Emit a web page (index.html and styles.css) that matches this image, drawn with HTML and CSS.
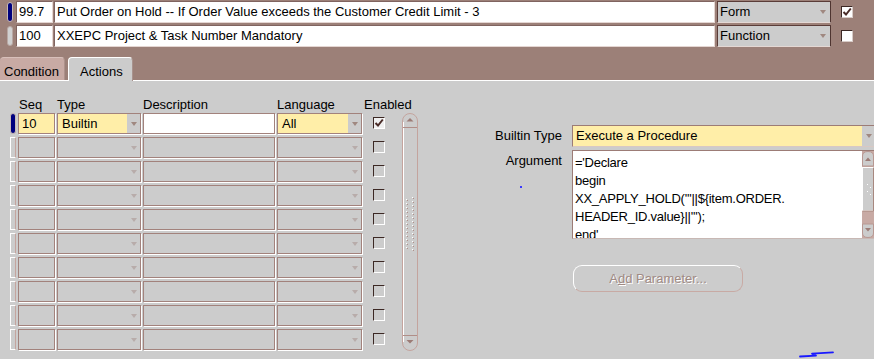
FILE: index.html
```html
<!DOCTYPE html>
<html>
<head>
<meta charset="utf-8">
<link rel="stylesheet" href="styles.css">
</head>
<body>
<div class="top">
  <div class="rec-row">
    <span class="ind ind-cur"></span>
    <div class="tfld tseq">99.7</div>
    <div class="tfld tdesc">Put Order on Hold -- If Order Value exceeds the Customer Credit Limit - 3</div>
    <div class="tsel"><span class="tsel-text">Form</span><span class="tri"></span></div>
    <span class="chk chk-top"><svg width="10" height="10" viewBox="0 0 10 10"><path d="M1.5 5 L4 7.5 L8.8 1.5" fill="none" stroke="#4a2c28" stroke-width="2"/></svg></span>
  </div>
  <div class="rec-row">
    <span class="ind ind-off"></span>
    <div class="tfld tseq">100</div>
    <div class="tfld tdesc">XXEPC Project &amp; Task Number Mandatory</div>
    <div class="tsel"><span class="tsel-text">Function</span><span class="tri"></span></div>
    <span class="chk chk-top"></span>
  </div>
  <div class="tabs">
    <div class="tab tab-cond">Condition</div>
    <div class="tab tab-act">Actions</div>
  </div>
</div>
<div class="panel">
  <div class="table">
    <div class="thead">
      <span></span>
      <span class="h h-seq">Seq</span>
      <span class="h">Type</span>
      <span class="h">Description</span>
      <span class="h">Language</span>
      <span class="h h-en">Enabled</span>
    </div>
    <div class="tbody">
      <div class="rows">
        <span class="rind rind-cur"></span>
        <div class="cell yel">10</div>
        <div class="cell sel"><span class="sel-text yel">Builtin</span><span class="sel-btn"><span class="tri"></span></span></div>
        <div class="cell wht"></div>
        <div class="cell sel"><span class="sel-text yel">All</span><span class="sel-btn"><span class="tri"></span></span></div>
        <span></span>
        <span class="chk chk-low chk-on"><svg width="10" height="10" viewBox="0 0 10 10"><path d="M1.5 5 L4 7.5 L8.8 1.5" fill="none" stroke="#4a2c28" stroke-width="2"/></svg></span>

        <span class="rind"></span><div class="cell"></div><div class="cell sel"><span class="sel-text"></span><span class="sel-btn"><span class="tri tri-dim"></span></span></div><div class="cell"></div><div class="cell sel"><span class="sel-text"></span><span class="sel-btn"><span class="tri tri-dim"></span></span></div><span></span><span class="chk chk-low"></span>
        <span class="rind"></span><div class="cell"></div><div class="cell sel"><span class="sel-text"></span><span class="sel-btn"><span class="tri tri-dim"></span></span></div><div class="cell"></div><div class="cell sel"><span class="sel-text"></span><span class="sel-btn"><span class="tri tri-dim"></span></span></div><span></span><span class="chk chk-low"></span>
        <span class="rind"></span><div class="cell"></div><div class="cell sel"><span class="sel-text"></span><span class="sel-btn"><span class="tri tri-dim"></span></span></div><div class="cell"></div><div class="cell sel"><span class="sel-text"></span><span class="sel-btn"><span class="tri tri-dim"></span></span></div><span></span><span class="chk chk-low"></span>
        <span class="rind"></span><div class="cell"></div><div class="cell sel"><span class="sel-text"></span><span class="sel-btn"><span class="tri tri-dim"></span></span></div><div class="cell"></div><div class="cell sel"><span class="sel-text"></span><span class="sel-btn"><span class="tri tri-dim"></span></span></div><span></span><span class="chk chk-low"></span>
        <span class="rind"></span><div class="cell"></div><div class="cell sel"><span class="sel-text"></span><span class="sel-btn"><span class="tri tri-dim"></span></span></div><div class="cell"></div><div class="cell sel"><span class="sel-text"></span><span class="sel-btn"><span class="tri tri-dim"></span></span></div><span></span><span class="chk chk-low"></span>
        <span class="rind"></span><div class="cell"></div><div class="cell sel"><span class="sel-text"></span><span class="sel-btn"><span class="tri tri-dim"></span></span></div><div class="cell"></div><div class="cell sel"><span class="sel-text"></span><span class="sel-btn"><span class="tri tri-dim"></span></span></div><span></span><span class="chk chk-low"></span>
        <span class="rind"></span><div class="cell"></div><div class="cell sel"><span class="sel-text"></span><span class="sel-btn"><span class="tri tri-dim"></span></span></div><div class="cell"></div><div class="cell sel"><span class="sel-text"></span><span class="sel-btn"><span class="tri tri-dim"></span></span></div><span></span><span class="chk chk-low"></span>
        <span class="rind"></span><div class="cell"></div><div class="cell sel"><span class="sel-text"></span><span class="sel-btn"><span class="tri tri-dim"></span></span></div><div class="cell"></div><div class="cell sel"><span class="sel-text"></span><span class="sel-btn"><span class="tri tri-dim"></span></span></div><span></span><span class="chk chk-low"></span>
        <span class="rind"></span><div class="cell"></div><div class="cell sel"><span class="sel-text"></span><span class="sel-btn"><span class="tri tri-dim"></span></span></div><div class="cell"></div><div class="cell sel"><span class="sel-text"></span><span class="sel-btn"><span class="tri tri-dim"></span></span></div><span></span><span class="chk chk-low"></span>
      </div>
      <svg class="vscroll" width="16" height="238" viewBox="0 0 16 238">
        <rect x="0.5" y="0.5" width="15" height="237" rx="7.5" fill="#cccccc" stroke="#c4a49e"/>
        <path d="M1.5 9 V229" stroke="#ffffff"/>
        <path d="M1 14.5 H15" stroke="#b08e88"/>
        <path d="M1 222.5 H15" stroke="#b08e88"/>
        <polygon points="4.5,8.5 11.5,8.5 8,5" fill="#9c7c76"/>
        <polygon points="4.5,227 11.5,227 8,230.5" fill="#9c7c76"/>
        <g fill="#ffffff">
          <rect x="4" y="86" width="1" height="1"/><rect x="10" y="84" width="1" height="1"/>
          <rect x="4" y="90" width="1" height="1"/><rect x="10" y="88" width="1" height="1"/>
          <rect x="4" y="94" width="1" height="1"/><rect x="10" y="92" width="1" height="1"/>
          <rect x="4" y="98" width="1" height="1"/><rect x="10" y="96" width="1" height="1"/>
          <rect x="4" y="102" width="1" height="1"/><rect x="10" y="100" width="1" height="1"/>
          <rect x="4" y="106" width="1" height="1"/><rect x="10" y="104" width="1" height="1"/>
          <rect x="4" y="110" width="1" height="1"/><rect x="10" y="108" width="1" height="1"/>
          <rect x="4" y="114" width="1" height="1"/><rect x="10" y="112" width="1" height="1"/>
          <rect x="4" y="118" width="1" height="1"/><rect x="10" y="116" width="1" height="1"/>
          <rect x="4" y="122" width="1" height="1"/><rect x="10" y="120" width="1" height="1"/>
          <rect x="4" y="126" width="1" height="1"/><rect x="10" y="124" width="1" height="1"/>
          <rect x="4" y="130" width="1" height="1"/><rect x="10" y="128" width="1" height="1"/>
          <rect x="4" y="134" width="1" height="1"/><rect x="10" y="132" width="1" height="1"/>
          <rect x="10" y="136" width="1" height="1"/>
        </g>
        <g fill="#b0908a">
          <rect x="5" y="87" width="1" height="1"/><rect x="11" y="85" width="1" height="1"/>
          <rect x="5" y="91" width="1" height="1"/><rect x="11" y="89" width="1" height="1"/>
          <rect x="5" y="95" width="1" height="1"/><rect x="11" y="93" width="1" height="1"/>
          <rect x="5" y="99" width="1" height="1"/><rect x="11" y="97" width="1" height="1"/>
          <rect x="5" y="103" width="1" height="1"/><rect x="11" y="101" width="1" height="1"/>
          <rect x="5" y="107" width="1" height="1"/><rect x="11" y="105" width="1" height="1"/>
          <rect x="5" y="111" width="1" height="1"/><rect x="11" y="109" width="1" height="1"/>
          <rect x="5" y="115" width="1" height="1"/><rect x="11" y="113" width="1" height="1"/>
          <rect x="5" y="119" width="1" height="1"/><rect x="11" y="117" width="1" height="1"/>
          <rect x="5" y="123" width="1" height="1"/><rect x="11" y="121" width="1" height="1"/>
          <rect x="5" y="127" width="1" height="1"/><rect x="11" y="125" width="1" height="1"/>
          <rect x="5" y="131" width="1" height="1"/><rect x="11" y="129" width="1" height="1"/>
          <rect x="5" y="135" width="1" height="1"/><rect x="11" y="133" width="1" height="1"/>
          <rect x="11" y="137" width="1" height="1"/>
        </g>
      </svg>
    </div>
  </div>
  <div class="detail">
    <div class="lbl lbl-mid">Builtin Type</div>
    <div class="dsel"><span class="dsel-text">Execute a Procedure</span><span class="sel-btn dsel-btn"><span class="tri"></span></span></div>
    <div class="lbl lbl-top">Argument</div>
    <div class="argbox">
      <div class="argtext">='Declare
begin
XX_APPLY_HOLD('''||${item.ORDER.
HEADER_ID.value}||''');
end'</div>
      <svg class="argscroll" width="12" height="87" viewBox="0 0 12 87">
        <rect x="0" y="0" width="12" height="87" fill="#c8aaa4"/>
        <path d="M0.5 15 V5 Q0.5 0.5 6 0.5 Q11.5 0.5 11.5 5 V15 Z" fill="#cccccc" stroke="#b89892"/>
        <polygon points="3,10 9,10 6,6.5" fill="#9c7c76"/>
        <rect x="0.5" y="16.5" width="11" height="43" fill="#cccccc" stroke="#ffffff"/>
        <path d="M0.5 60 H11.5 V16.5" fill="none" stroke="#a8887f"/>
        <rect x="5" y="33" width="1" height="1" fill="#fff"/><rect x="8" y="36" width="1" height="1" fill="#fff"/>
        <rect x="5" y="40" width="1" height="1" fill="#fff"/><rect x="8" y="43" width="1" height="1" fill="#fff"/>
        <path d="M0.5 73 V82 Q0.5 86.5 6 86.5 Q11.5 86.5 11.5 82 V73 Z" fill="#cccccc" stroke="#b89892"/>
        <polygon points="3,77 9,77 6,80.5" fill="#9c7c76"/>
      </svg>
    </div>
    <div class="btn-slot">
      <div class="btn">A<u>d</u>d Parameter...</div>
    </div>
  </div>
</div>
<span class="ink-dot"></span>
<svg class="ink-scribble" width="36" height="8" viewBox="0 0 36 8"><path d="M1 6.5 L17 5.6 L13 3.6 L34 2.4" fill="none" stroke="#1a1aff" stroke-width="1.8" stroke-linecap="round" stroke-linejoin="round"/></svg>
</body>
</html>
```

FILE: styles.css
```css
* { box-sizing: border-box; }
html, body { margin: 0; padding: 0; }
body {
  width: 874px;
  height: 359px;
  overflow: hidden;
  position: relative;
  background: #cccccc;
  font-family: "Liberation Sans", Arial, sans-serif;
  font-size: 13px;
  color: #000;
}

/* ---------- top region ---------- */
.top {
  background: #9c8078;
  height: 80px;
  padding-top: 1px;
  display: flex;
  flex-direction: column;
}
.rec-row {
  display: flex;
  align-items: center;
  height: 22px;
  margin-bottom: 2px;
  padding-left: 7px;
}
.ind {
  width: 6px;
  height: 20px;
  border-radius: 3px;
}
.ind-cur { background: #00007e; border: 1px solid #c8b8b4; }
.ind-off { background: #d0d0d0; border: 1px solid #b8a8a4; }
.tfld {
  height: 22px;
  background: #fff;
  border: 1px solid;
  border-color: #806460 #e4d6d2 #e4d6d2 #806460;
  line-height: 20px;
  padding-left: 2px;
  white-space: nowrap;
  overflow: hidden;
}
.tseq { width: 37px; margin-left: 3px; }
.tdesc { width: 661px; margin-left: 1px; }
.tsel {
  width: 114px;
  height: 22px;
  margin-left: 2px;
  background: #cccccc;
  border: 1px solid;
  border-color: #5a3c38 #4e3430 #e4d8d4 #5a3c38;
  display: flex;
  align-items: center;
  padding: 0 4px 0 2px;
}
.tsel-text { flex: 1; line-height: 20px; }
.tri {
  width: 0;
  height: 0;
  border-left: 3.5px solid transparent;
  border-right: 3.5px solid transparent;
  border-top: 4px solid #a08880;
}
.tri-dim { border-top-color: #b8acaa; }

.chk {
  width: 12px;
  height: 12px;
  border: 1px solid;
  display: flex;
  align-items: center;
  justify-content: center;
}
.chk-top {
  margin-left: 10px;
  background: #fff;
  border-color: #3c2824 #d8ccc8 #d8ccc8 #3c2824;
}

/* tabs */
.tabs {
  margin-top: auto;
  display: flex;
  align-items: flex-end;
  height: 23px;
  position: relative;
  z-index: 1;
}
.tab {
  height: 23px;
  width: 65px;
  padding-top: 4px;
  line-height: 19px;
  border-radius: 4px 4px 0 0;
}
.tab-cond {
  background: #c8aaa4;
  padding-left: 4px;
  border-top: 1px solid #d8c0bb;
  border-right: 1px solid #ad918b;
}
.tab-act {
  background: #cccccc;
  margin-left: 3px;
  height: 24px;
  margin-bottom: -1px;
  padding-left: 11px;
  border-top: 1px solid #fff;
  border-left: 1px solid #fff;
  border-right: 1px solid #a8928d;
}

/* ---------- lower panel ---------- */
.panel {
  border-top: 1px solid #fff;
  height: 279px;
  display: flex;
  padding: 15px 0 0 10px;
}
.table { display: flex; flex-direction: column; }
.thead,
.rows {
  display: grid;
  grid-template-columns: 6px 37px 84px 132px 85px 7px 12px;
  column-gap: 2px;
}
.thead { height: 17px; line-height: 17px; white-space: nowrap; }
.h-seq { padding-left: 1px; }
.h-en { grid-column: 6 / span 2; }
.tbody { display: flex; align-items: flex-start; }
.rows {
  grid-auto-rows: 21px;
  row-gap: 3px;
}
.vscroll { margin-left: 17px; display: block; }

.rind {
  width: 6px;
  height: 21px;
  border: 1px solid;
  border-color: #fff #c4a49e #fff #fff;
}
.rind-cur {
  background: #00007e;
  border-radius: 3px;
  border-color: #c8b8b4;
}
.cell {
  border: 1px solid #a2827c;
  box-shadow: 1px 1px 0 #fff;
  line-height: 19px;
  padding: 0 3px;
  background: #cccccc;
}
.cell.yel { background: #ffeea8; }
.cell.wht { background: #fff; }
.cell.sel { display: flex; padding: 0; }
.sel-text { flex: 1; padding-left: 4px; line-height: 19px; }
.sel-text.yel { background: #ffeea8; }
.sel-btn {
  width: 13px;
  display: flex;
  align-items: center;
  justify-content: center;
  background: #cccccc;
}
.chk-low {
  align-self: center;
  margin-top: -1px;
  border-color: #3c2824 #fff #fff #3c2824;
}
.chk-on { background: #f0f0f0; }

/* ---------- detail ---------- */
.detail {
  margin-left: 54px;
  margin-top: 29px;
  align-self: flex-start;
  display: grid;
  grid-template-columns: 90px 304px;
  grid-template-rows: 22px 89px auto;
  column-gap: 10px;
  row-gap: 3px;
}
.lbl { text-align: right; white-space: nowrap; }
.lbl-mid { line-height: 22px; }
.lbl-top { line-height: 18px; padding-top: 2px; }
.dsel {
  border: 1px solid;
  border-color: #9c7c76 #d8c8c4 #d8c8c4 #9c7c76;
  background: #ffeea8;
  display: flex;
}
.dsel-text { flex: 1; padding-left: 3px; line-height: 20px; }
.dsel-btn { width: 13px; }
.argbox {
  border: 1px solid;
  border-color: #9c7c76 #d8c8c4 #c8b8b4 #9c7c76;
  background: #fff;
  display: flex;
  overflow: hidden;
}
.argtext {
  flex: 1;
  white-space: pre;
  line-height: 18.1px;
  padding: 3px 0 0 2px;
  letter-spacing: -0.25px;
  overflow: hidden;
}
.argscroll { display: block; margin-right: 1px; }
.btn-slot { grid-column: 2; padding-top: 23px; padding-left: 1px; }
.btn {
  width: 170px;
  height: 27px;
  border-radius: 9px;
  border: 1px solid;
  border-color: #fff #c8aaa4 #c8aaa4 #fff;
  text-align: center;
  line-height: 25px;
  color: #a08a84;
  text-shadow: 1px 1px 0 #fff;
}
.btn u { text-decoration-color: #a08a84; }

/* ink marks drawn over the canvas */
.ink-dot {
  position: absolute;
  left: 520px;
  top: 186px;
  width: 2px;
  height: 2px;
  background: #3a3aff;
}
.ink-scribble {
  position: absolute;
  left: 799px;
  top: 350px;
}
```
